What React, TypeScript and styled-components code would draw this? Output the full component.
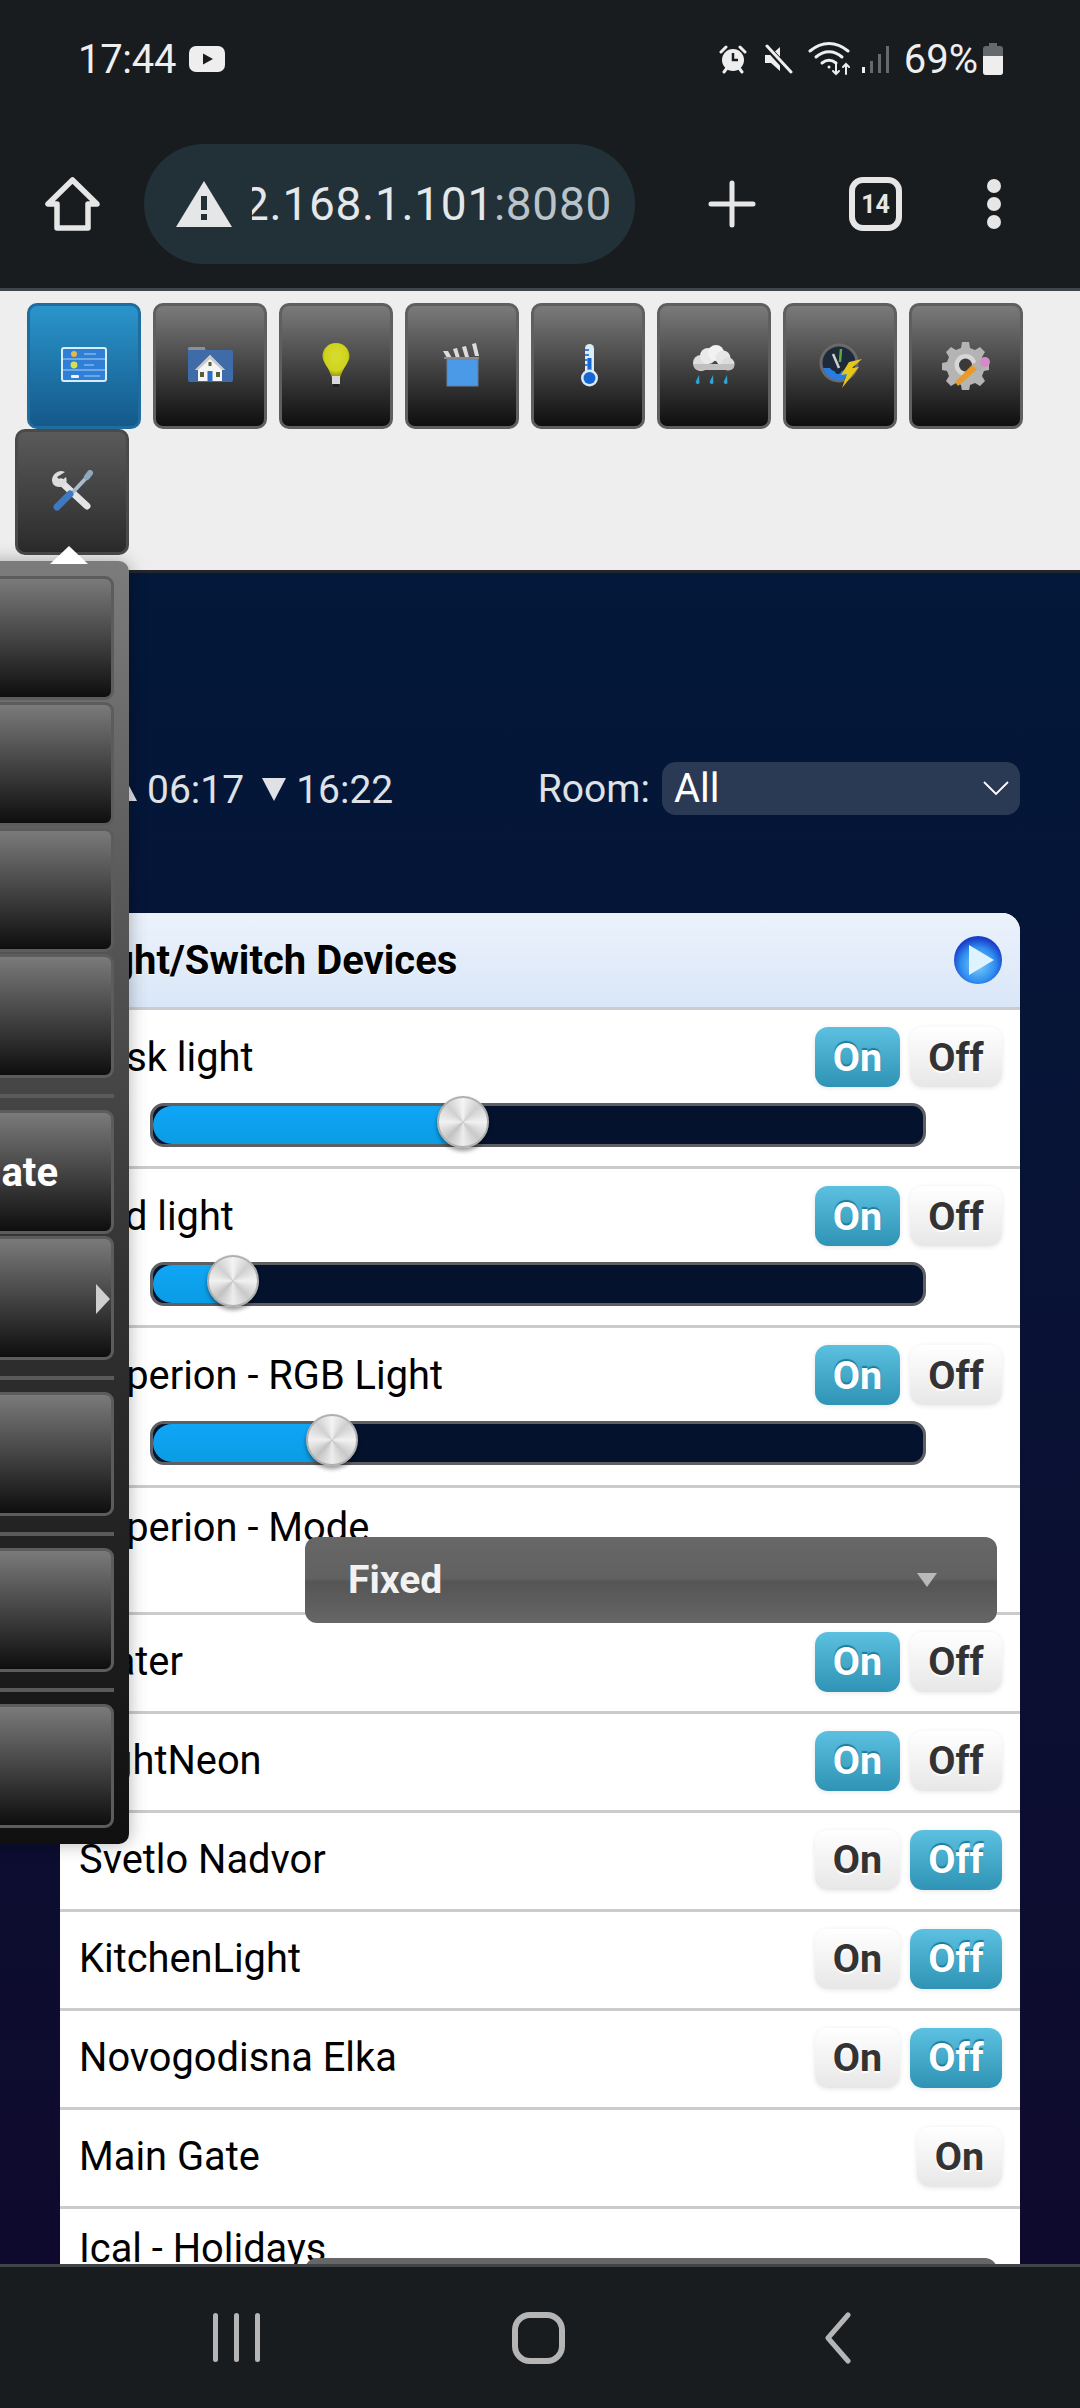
import styled, { createGlobalStyle } from "styled-components";

const GlobalStyle = createGlobalStyle`
  * { box-sizing: border-box; }
  html, body { margin: 0; padding: 0; background: #181c1f; }
  body { font-family: Roboto, "Noto Sans", sans-serif; }
`;

const Screen = styled.div`
  position: relative;
  display: flex;
  flex-direction: column;
  width: 1080px;
  height: 2408px;
  overflow: hidden;
`;

/* ---------- phone chrome ---------- */

const StatusBar = styled.div`
  display: flex;
  align-items: center;
  justify-content: space-between;
  height: 120px;
  padding: 0 77px 2px 78px;
  background: #181c1f;
  color: #eeeeee;
  font-size: 40px;
  flex: none;
`;

const StatusGroup = styled.div`
  display: flex;
  align-items: center;
`;

const Clock = styled.span`
  width: 111px;
  letter-spacing: -0.3px;
`;

const StatusText = styled.span`
  margin: 0 5px 0 13px;
`;

const StatusGap = styled.span<{ $size: number }>`
  width: ${({ $size }) => $size}px;
`;

const Toolbar = styled.div`
  display: flex;
  align-items: center;
  height: 171px;
  padding-left: 45px;
  background: #181c1f;
  border-bottom: 3px solid #3f4549;
  flex: none;
`;

const UrlPill = styled.div`
  display: flex;
  align-items: center;
  width: 491px;
  height: 120px;
  margin-left: 44px;
  padding-left: 32px;
  border-radius: 60px;
  background: #223037;
`;

const UrlText = styled.div`
  display: flex;
  justify-content: flex-end;
  width: 360px;
  margin-left: 20px;
  overflow: hidden;
  white-space: nowrap;
  font-size: 46px;
  letter-spacing: 0.7px;
  color: #e4e8ea;
`;

const UrlPort = styled.span`
  color: #b9c3c9;
`;

const PlusSlot = styled.div`
  display: flex;
  margin-left: 73px;
`;

const TabCount = styled.div`
  display: flex;
  align-items: center;
  justify-content: center;
  width: 53px;
  height: 54px;
  margin-left: 93px;
  border: 6px solid #e6e6e6;
  border-radius: 14px;
  color: #e6e6e6;
  font-size: 25px;
  font-weight: 700;
`;

const MenuDots = styled.div`
  display: flex;
  flex-direction: column;
  gap: 4px;
  margin-left: 85px;
`;

const MenuDot = styled.span`
  width: 14px;
  height: 14px;
  border-radius: 50%;
  background: #e6e6e6;
`;

const BottomBar = styled.div`
  display: flex;
  align-items: center;
  height: 144px;
  padding-left: 213px;
  background: #181c1f;
  border-top: 3px solid #3f4549;
  flex: none;
`;

const RecentBars = styled.div`
  display: flex;
  gap: 16px;
`;

const RecentBar = styled.span`
  width: 5px;
  height: 49px;
  border-radius: 3px;
  background: #b5b5b5;
`;

const HomeKey = styled.div`
  width: 53px;
  height: 52px;
  margin-left: 252px;
  border: 6px solid #b5b5b5;
  border-radius: 18px;
`;

const BackKey = styled.div`
  display: flex;
  margin-left: 257px;
`;

/* ---------- icon navigation ---------- */

const Nav = styled.div`
  display: flex;
  flex-direction: column;
  height: 282px;
  padding-top: 12px;
  background: #eeeeee;
  border-bottom: 3px solid #23262b;
  flex: none;
`;

const NavRow = styled.div<{ $inset: number }>`
  display: flex;
  gap: 12px;
  padding-left: ${({ $inset }) => $inset}px;
`;

const NavButton = styled.div<{ $tone?: "active" | "dim" }>`
  display: flex;
  align-items: center;
  justify-content: center;
  width: 114px;
  height: 126px;
  border-radius: 10px;
  border: 3px solid
    ${({ $tone }) =>
      $tone === "active" ? "#1f6d9e" : $tone === "dim" ? "#4a4a4a" : "#5f5f5f"};
  background: ${({ $tone }) =>
    $tone === "active"
      ? "linear-gradient(#2a95cb, #14598a)"
      : $tone === "dim"
      ? "linear-gradient(#5a5a5a, #2b2b2b)"
      : "linear-gradient(#7a7a7a, #0e0e0e)"};

  svg {
    filter: blur(0.5px);
  }
`;

/* ---------- page content ---------- */

const Content = styled.div`
  flex: 1;
  min-height: 0;
  padding: 189px 60px 0;
  overflow: hidden;
  background: linear-gradient(#03183a, #0f0a2d);
`;

const InfoRow = styled.div`
  display: flex;
  align-items: center;
  justify-content: space-between;
  height: 53px;
  color: #dfe1e6;
  font-size: 39px;
`;

const SunTimes = styled.div`
  display: flex;
  align-items: center;
  padding: 2px 0 0 53px;
`;

const SunArrow = styled.span<{ $down?: boolean }>`
  width: 0;
  height: 0;
  margin-right: 10px;
  border-left: 12px solid transparent;
  border-right: 12px solid transparent;
  ${({ $down }) =>
    $down
      ? "border-top: 23px solid #dfe1e6; margin-left: 18px;"
      : "border-bottom: 23px solid #dfe1e6;"}
`;

const RoomPicker = styled.div`
  display: flex;
  align-items: center;
  gap: 12px;
`;

const RoomSelect = styled.div`
  display: flex;
  align-items: center;
  justify-content: space-between;
  width: 358px;
  height: 53px;
  padding: 0 11px 0 12px;
  border-radius: 14px;
  background: #2a3a54;
  color: #ffffff;
  font-size: 40px;
`;

const Card = styled.div`
  margin-top: 98px;
  border-radius: 18px 18px 0 0;
  background: #ffffff;
  overflow: hidden;
`;

const CardHeader = styled.div`
  display: flex;
  align-items: center;
  justify-content: space-between;
  height: 97px;
  padding: 0 18px 0 19px;
  background: linear-gradient(#ebf2fb, #dae7f8);
  border-bottom: 3px solid #c9ccd0;
  color: #000000;
  font-size: 40px;
  font-weight: 700;
  text-shadow: 0 1px 0 #ffffff;
`;

const Row = styled.div<{ $height: number }>`
  position: relative;
  height: ${({ $height }) => $height}px;
  padding: 17px 18px 0 19px;
  border-bottom: 3px solid #cbcbcb;
`;

const RowHead = styled.div`
  display: flex;
  align-items: center;
  justify-content: space-between;
  height: 60px;
`;

const RowLabel = styled.span`
  color: #000000;
  font-size: 39.8px;
  white-space: nowrap;
`;

const ButtonGroup = styled.div`
  display: flex;
  gap: 10px;
`;

const SwitchButton = styled.div<{ $active?: boolean; $wide?: boolean }>`
  display: flex;
  align-items: center;
  justify-content: center;
  width: ${({ $wide }) => ($wide ? 92 : 85)}px;
  height: 60px;
  border-radius: 13px;
  font-size: 39.5px;
  font-weight: 700;
  color: ${({ $active }) => ($active ? "#ffffff" : "#333333")};
  text-shadow: ${({ $active }) =>
    $active ? "0 -2px 1px #1f7b9c" : "0 2px 1px #ffffff"};
  background: ${({ $active }) =>
    $active
      ? "linear-gradient(#5cc0e0, #2f93b5)"
      : "linear-gradient(#ffffff, #e7e7e7)"};
  box-shadow: 0 1px 5px rgba(0, 0, 0, 0.1);
`;

const Track = styled.div`
  position: relative;
  width: 776px;
  height: 44px;
  margin: 16px 0 0 71px;
  border: 3px solid #5e5f63;
  border-radius: 14px;
  background: #04122e;
`;

const TrackFill = styled.div`
  height: 100%;
  border-radius: 20px 0 0 20px;
  background: linear-gradient(#10a6f6, #0a9ce4);
`;

const Thumb = styled.div`
  position: absolute;
  top: -10px;
  width: 52px;
  height: 52px;
  margin-left: -26px;
  border: 2px solid #b0b0b0;
  border-radius: 50%;
  background: conic-gradient(
    #f4f4f4,
    #cfcfcf 12%,
    #f2f2f2 25%,
    #c9c9c9 38%,
    #ededed 50%,
    #c2c2c2 62%,
    #f1f1f1 75%,
    #d0d0d0 88%,
    #f4f4f4
  );
  box-shadow: 0 3px 4px rgba(0, 0, 0, 0.4);
`;

const ModeLabel = styled.div`
  height: 60px;
  margin-top: -7px;
  line-height: 60px;
`;

const ModeSelect = styled.div`
  position: absolute;
  top: 49px;
  left: 245px;
  z-index: 1;
  display: flex;
  align-items: center;
  justify-content: space-between;
  width: 692px;
  height: 86px;
  padding: 0 60px 0 43px;
  border-radius: 12px;
  background: linear-gradient(#676767 0%, #616161 48%, #555555 52%, #666666 100%);
  color: #f2f2f2;
  font-size: 39px;
  font-weight: 700;
`;

const ModeCaret = styled.span`
  width: 0;
  height: 0;
  border-left: 10px solid transparent;
  border-right: 10px solid transparent;
  border-top: 14px solid #b9b9b9;
`;

/* ---------- fly-out menu over the page ---------- */

const Flyout = styled.div`
  position: absolute;
  top: 561px;
  left: -200px;
  z-index: 2;
  width: 329px;
  padding: 15px 15px 16px 0;
  border-radius: 10px;
  background: linear-gradient(#7c7c7c, #333333 55%, #101010);
  box-shadow: 0 0 18px rgba(0, 0, 0, 0.3);

  &::before {
    content: "";
    position: absolute;
    top: -15px;
    left: 250px;
    border-left: 19px solid transparent;
    border-right: 19px solid transparent;
    border-bottom: 18px solid #ffffff;
  }
`;

const FlyoutItem = styled.div`
  position: relative;
  display: flex;
  align-items: center;
  justify-content: flex-end;
  height: 124px;
  padding-right: 53px;
  border: 3px solid #5c5c5c;
  border-radius: 9px;
  background: linear-gradient(#7a7a7a, #0e0e0e);
  color: #ffffff;
  font-size: 40px;
  font-weight: 700;

  & + & {
    margin-top: 2px;
  }
`;

const FlyoutArrow = styled.span`
  position: absolute;
  right: 1px;
  top: 45px;
  border-top: 15px solid transparent;
  border-bottom: 15px solid transparent;
  border-left: 14px solid #cfcfcf;
`;

const FlyoutDivider = styled.div`
  height: 4px;
  margin: 16px 0 12px;
  background: #5a5a5a;
`;

/* ---------- drawings ---------- */

const ScreenIcon = () => (
  <svg width="48" height="48" viewBox="0 0 48 48">
    <rect x="2" y="6" width="44" height="33" rx="2" fill="#2f7fd6" stroke="#d8ecfa" strokeWidth="2" />
    <path d="M3 17h42M3 28h42" stroke="#a9d4f4" strokeWidth="1" />
    <circle cx="14" cy="12" r="3" fill="#e8b54a" />
    <circle cx="14" cy="23" r="3.4" fill="#d5e04a" />
    <rect x="11" y="33" width="8" height="3" rx="1" fill="#f2f2f2" />
    <path d="M24 12h12M24 23h10M24 34h16" stroke="#7fb7ea" strokeWidth="1.5" />
  </svg>
);

const HouseIcon = () => (
  <svg width="48" height="48" viewBox="0 0 48 48">
    <path d="M2 7a2 2 0 0 1 2-2h14l3 3h24a2 2 0 0 1 2 2v28a2 2 0 0 1-2 2H4a2 2 0 0 1-2-2z" fill="#3f6ba8" />
    <path d="M2 8h17V5H4a2 2 0 0 0-2 2z" fill="#8a8f98" />
    <path d="M24 13 9 28h3v11h24V28h3z" fill="#f5f5f5" />
    <path d="M24 13 9 28h3l12-11 12 11h3z" fill="#c9c9c9" />
    <rect x="21.5" y="29" width="5" height="10" fill="#2d6fc4" />
    <rect x="14" y="30" width="4" height="5" fill="#5a5f3a" />
    <rect x="30" y="30" width="4" height="5" fill="#5a5f3a" />
    <rect x="22.5" y="20" width="3" height="4" fill="#5a5f3a" />
  </svg>
);

const BulbIcon = () => (
  <svg width="48" height="48" viewBox="0 0 48 48">
    <defs>
      <radialGradient id="bulbGlow" cx="50%" cy="40%" r="60%">
        <stop offset="0%" stopColor="#d8dc30" />
        <stop offset="70%" stopColor="#cfd31c" />
        <stop offset="100%" stopColor="#8f931a" />
      </radialGradient>
    </defs>
    <path d="M24 1c8 0 13.500 6 13.500 13 0 7-6.500 11-9 21h-9c-2.500-10-9-14-9-21C10.500 7 16 1 24 1z" fill="url(#bulbGlow)" />
    <rect x="20" y="34" width="8" height="8" fill="#d8d8d8" />
    <rect x="21" y="42" width="6" height="3" fill="#222222" />
  </svg>
);

const ClapperIcon = () => (
  <svg width="48" height="48" viewBox="0 0 48 48">
    <rect x="9" y="17" width="31" height="27" fill="#4a9ae8" stroke="#6a7f95" strokeWidth="1" />
    <path d="M5 9l4 7h5l-4-7zM15 7l3 9h4l-3-10zM24 5l3 10h4l-3-11zM34 2l3 12h4l-3-13z" fill="#dcdcdc" />
    <path d="M6 15h35v2H6z" fill="#8a8a8a" />
  </svg>
);

const ThermometerIcon = () => (
  <svg width="48" height="48" viewBox="0 0 48 48">
    <rect x="21" y="2" width="9" height="32" rx="4.500" fill="#dcebf8" />
    <rect x="23.500" y="16" width="4" height="20" fill="#1667cf" />
    <path d="M21 8h4M21 13h4M21 18h3M21 23h3" stroke="#2f86dc" strokeWidth="2" />
    <circle cx="25.500" cy="36" r="8.500" fill="#d9e9f7" />
    <circle cx="25.500" cy="36" r="6" fill="#1466d2" />
  </svg>
);

const RainIcon = () => (
  <svg width="48" height="48" viewBox="0 0 48 48">
    <circle cx="11" cy="21" r="8" fill="#dedede" />
    <circle cx="18" cy="14" r="8" fill="#eaeaea" />
    <circle cx="26" cy="11" r="8" fill="#f2f2f2" />
    <circle cx="33" cy="16" r="7.500" fill="#e6e6e6" />
    <circle cx="38" cy="22" r="6.500" fill="#dcdcdc" />
    <path d="M4 22h40c1 3-1 6-5 6H9c-4 0-6-3-5-6z" fill="#c0c0c0" />
    <path d="M9 33l-3 6a2 2 0 0 0 3.500 2zM23 33l-3 6a2 2 0 0 0 3.500 2zM37 33l-3 6a2 2 0 0 0 3.500 2z" fill="#2ea3d6" />
  </svg>
);

const GaugeIcon = () => (
  <svg width="48" height="48" viewBox="0 0 48 48">
    <circle cx="23" cy="21" r="18" fill="#1c2a3c" stroke="#6a6a6a" strokeWidth="3" />
    <path d="M7 26h7c2 3 8 6 14 2l4 5-5 5c-9 2-17-3-20-12z" fill="#2a7de0" />
    <circle cx="22" cy="29" r="3" fill="#1c2a3c" />
    <path d="M17 12l6 14" stroke="#d0d0d0" strokeWidth="2.500" />
    <path d="M25 7l-1 13" stroke="#5fa83a" strokeWidth="2.500" />
    <path d="M46 17 33 20l-8 13 6-1-5 14 17-21-7 1z" fill="#e6c619" />
  </svg>
);

const GearIcon = () => (
  <svg width="48" height="48" viewBox="0 0 48 48">
    <path d="M20 0h7l1 6 5 2 5-3 5 5-3 5 2 5 5 1v7l-5 1-2 5 3 5-5 5-5-3-5 2-1 6h-7l-1-6-5-2-5 3-5-5 3-5-2-5-5-1v-7l5-1 2-5-3-5 5-5 5 3 5-2z" fill="#b4b4b4" />
    <circle cx="23.500" cy="23" r="11" fill="#d6d6d6" />
    <circle cx="23.500" cy="23" r="6.500" fill="#3a3a3a" />
    <path d="M16 44l-3-4 19-19 5 5z" fill="#ea9a2b" />
    <path d="M30 23l7 7 5-6-5-6z" fill="#b0b0b0" />
    <circle cx="43" cy="20" r="5" fill="#d68ac8" />
  </svg>
);

const ToolsIcon = () => (
  <svg width="48" height="48" viewBox="0 0 48 48" fill="none" strokeLinecap="round">
    <path d="M13 14 39 38" stroke="#e4e4e4" strokeWidth="7" />
    <path d="M17 4a9 9 0 0 0-12 12c2 3 7 4 11 2 3-2 3-6 2-9l-5 4-4-4z" fill="#dddddd" />
    <path d="M26 23 40 8" stroke="#a9bccd" strokeWidth="4" />
    <path d="M39 9l3-4" stroke="#8fa8bf" strokeWidth="6" />
    <path d="M9 39 22 26" stroke="#3d78c0" strokeWidth="7" />
  </svg>
);

const AlarmIcon = () => (
  <svg width="30" height="30" viewBox="0 0 30 30">
    <circle cx="15" cy="16" r="11" fill="#eeeeee" />
    <path d="M15 9v7h5" stroke="#181c1f" strokeWidth="2.500" fill="none" />
    <path d="M3 8l5-5M27 8l-5-5M6 28l3-4M24 28l-3-4" stroke="#eeeeee" strokeWidth="3" strokeLinecap="round" />
  </svg>
);

const MuteIcon = () => (
  <svg width="32" height="30" viewBox="0 0 32 30">
    <path d="M3 11h6l9-8v24l-9-8H3z" fill="#eeeeee" />
    <path d="M4 2l24 26" stroke="#181c1f" strokeWidth="6" />
    <path d="M5 2l24 26" stroke="#eeeeee" strokeWidth="3" strokeLinecap="round" />
  </svg>
);

const WifiIcon = () => (
  <svg width="46" height="34" viewBox="0 0 46 34" fill="none" stroke="#eeeeee" strokeLinecap="round">
    <path d="M2 9c12-10 26-10 38 0" strokeWidth="3" />
    <path d="M8 15c8-7 18-7 26 0" strokeWidth="3" />
    <path d="M14 21c5-4 9-4 14 0" strokeWidth="3" />
    <circle cx="21" cy="25" r="1.500" fill="#eeeeee" stroke="none" />
    <path d="M28 22v10m-3-3 3 3 3-3M38 32V22m-3 3 3-3 3 3" strokeWidth="2" />
  </svg>
);

const SignalIcon = () => (
  <svg width="30" height="30" viewBox="0 0 30 30">
    <rect x="1" y="23" width="3" height="6" fill="#eeeeee" />
    <rect x="9" y="17" width="3" height="12" fill="#66696b" />
    <rect x="17" y="10" width="3" height="19" fill="#66696b" />
    <rect x="25" y="2" width="3" height="27" fill="#66696b" />
  </svg>
);

const BatteryIcon = () => (
  <svg width="20" height="32" viewBox="0 0 20 32">
    <path d="M6 0h8v3h3a3 3 0 0 1 3 3v23a3 3 0 0 1-3 3H3a3 3 0 0 1-3-3V6a3 3 0 0 1 3-3h3z" fill="#66696b" />
    <path d="M0 13h20v16a3 3 0 0 1-3 3H3a3 3 0 0 1-3-3z" fill="#eeeeee" />
  </svg>
);

const YoutubeIcon = () => (
  <svg width="36" height="26" viewBox="0 0 36 26">
    <rect width="36" height="26" rx="7" fill="#eeeeee" />
    <path d="M14 7.500 24 13l-10 5.500z" fill="#181c1f" />
  </svg>
);

const HomeIcon = () => (
  <svg width="55" height="56" viewBox="0 0 55 56" fill="none" stroke="#e6e6e6" strokeWidth="5.500" strokeLinejoin="round">
    <path d="M27.500 4 3 28h9v24h31V28h9z" />
  </svg>
);

const WarningIcon = () => (
  <svg width="56" height="46" viewBox="0 0 56 46">
    <path d="M28 0 56 46H0z" fill="#e4e6e8" />
    <rect x="25" y="15" width="6" height="14" fill="#223037" />
    <rect x="25" y="33" width="6" height="6" fill="#223037" />
  </svg>
);

const PlusIcon = () => (
  <svg width="48" height="48" viewBox="0 0 48 48" stroke="#e6e6e6" strokeWidth="5" strokeLinecap="round">
    <path d="M24 3v42M3 24h42" />
  </svg>
);

const BackIcon = () => (
  <svg width="30" height="52" viewBox="0 0 30 52" fill="none" stroke="#b5b5b5" strokeWidth="5" strokeLinecap="round" strokeLinejoin="round">
    <path d="M26 3 6 26l20 23" />
  </svg>
);

const ChevronIcon = () => (
  <svg width="26" height="15" viewBox="0 0 26 15" fill="none" stroke="#ffffff" strokeWidth="1.800">
    <path d="M1 1l12 12L25 1" />
  </svg>
);

const PlayIcon = () => (
  <svg width="48" height="48" viewBox="0 0 48 48">
    <defs>
      <radialGradient id="playBall" cx="50%" cy="60%" r="55%">
        <stop offset="0%" stopColor="#7fd0f8" />
        <stop offset="65%" stopColor="#2f8ef0" />
        <stop offset="100%" stopColor="#1a3fc8" />
      </radialGradient>
    </defs>
    <circle cx="24" cy="24" r="24" fill="url(#playBall)" />
    <path d="M15 9 40 24 15 39z" fill="#dff3fe" />
  </svg>
);

/* ---------- data ---------- */

const navIcons = [ScreenIcon, HouseIcon, BulbIcon, ClapperIcon, ThermometerIcon, RainIcon, GaugeIcon, GearIcon];

const sliderRows = [
  { name: "Desk light", value: 40.2 },
  { name: "Bed light", value: 10.4 },
  { name: "Hyperion - RGB Light", value: 23.3 },
];

const switchRows = [
  { name: "Water", on: true },
  { name: "LightNeon", on: true },
  { name: "Svetlo Nadvor", on: false },
  { name: "KitchenLight", on: false },
  { name: "Novogodisna Elka", on: false },
];

const OnOff = ({ on }: { on: boolean }) => (
  <ButtonGroup>
    <SwitchButton $active={on}>On</SwitchButton>
    <SwitchButton $active={!on} $wide>Off</SwitchButton>
  </ButtonGroup>
);

const App = (): React.ReactElement => (
  <Screen>
    <GlobalStyle />
    <StatusBar>
      <StatusGroup>
        <Clock>17:44</Clock>
        <YoutubeIcon />
      </StatusGroup>
      <StatusGroup>
        <AlarmIcon />
        <StatusGap $size={14} />
        <MuteIcon />
        <StatusGap $size={14} />
        <WifiIcon />
        <StatusGap $size={7} />
        <SignalIcon />
        <StatusText>69%</StatusText>
        <BatteryIcon />
      </StatusGroup>
    </StatusBar>

    <Toolbar>
      <HomeIcon />
      <UrlPill>
        <WarningIcon />
        <UrlText>
          <span>192.168.1.101<UrlPort>:8080</UrlPort></span>
        </UrlText>
      </UrlPill>
      <PlusSlot><PlusIcon /></PlusSlot>
      <TabCount>14</TabCount>
      <MenuDots>
        <MenuDot />
        <MenuDot />
        <MenuDot />
      </MenuDots>
    </Toolbar>

    <Nav>
      <NavRow $inset={27}>
        {navIcons.map((Icon, i) => (
          <NavButton key={i} $tone={i === 0 ? "active" : undefined}>
            <Icon />
          </NavButton>
        ))}
      </NavRow>
      <NavRow $inset={15}>
        <NavButton $tone="dim">
          <ToolsIcon />
        </NavButton>
      </NavRow>
    </Nav>

    <Content>
      <InfoRow>
        <SunTimes>
          <SunArrow />
          06:17
          <SunArrow $down />
          16:22
        </SunTimes>
        <RoomPicker>
          Room:
          <RoomSelect>
            All
            <ChevronIcon />
          </RoomSelect>
        </RoomPicker>
      </InfoRow>

      <Card>
        <CardHeader>
          Light/Switch Devices
          <PlayIcon />
        </CardHeader>

        {sliderRows.map((row) => (
          <Row key={row.name} $height={159.2}>
            <RowHead>
              <RowLabel>{row.name}</RowLabel>
              <OnOff on />
            </RowHead>
            <Track>
              <TrackFill style={{ width: `${row.value}%` }} />
              <Thumb style={{ left: `${row.value}%` }} />
            </Track>
          </Row>
        ))}

        <Row $height={127}>
          <ModeLabel>
            <RowLabel>Hyperion - Mode</RowLabel>
          </ModeLabel>
          <ModeSelect>
            Fixed
            <ModeCaret />
          </ModeSelect>
        </Row>

        {switchRows.map((row) => (
          <Row key={row.name} $height={99}>
            <RowHead>
              <RowLabel>{row.name}</RowLabel>
              <OnOff on={row.on} />
            </RowHead>
          </Row>
        ))}

        <Row $height={99}>
          <RowHead>
            <RowLabel>Main Gate</RowLabel>
            <SwitchButton>On</SwitchButton>
          </RowHead>
        </Row>

        <Row $height={127}>
          <ModeLabel>
            <RowLabel>Ical - Holidays</RowLabel>
          </ModeLabel>
          <ModeSelect />
        </Row>
      </Card>
    </Content>

    <BottomBar>
      <RecentBars>
        <RecentBar />
        <RecentBar />
        <RecentBar />
      </RecentBars>
      <HomeKey />
      <BackKey><BackIcon /></BackKey>
    </BottomBar>

    <Flyout>
      <FlyoutItem />
      <FlyoutItem />
      <FlyoutItem />
      <FlyoutItem />
      <FlyoutDivider />
      <FlyoutItem>Update</FlyoutItem>
      <FlyoutItem>
        <FlyoutArrow />
      </FlyoutItem>
      <FlyoutDivider />
      <FlyoutItem />
      <FlyoutDivider />
      <FlyoutItem />
      <FlyoutDivider />
      <FlyoutItem />
    </Flyout>
  </Screen>
);

export default App;
